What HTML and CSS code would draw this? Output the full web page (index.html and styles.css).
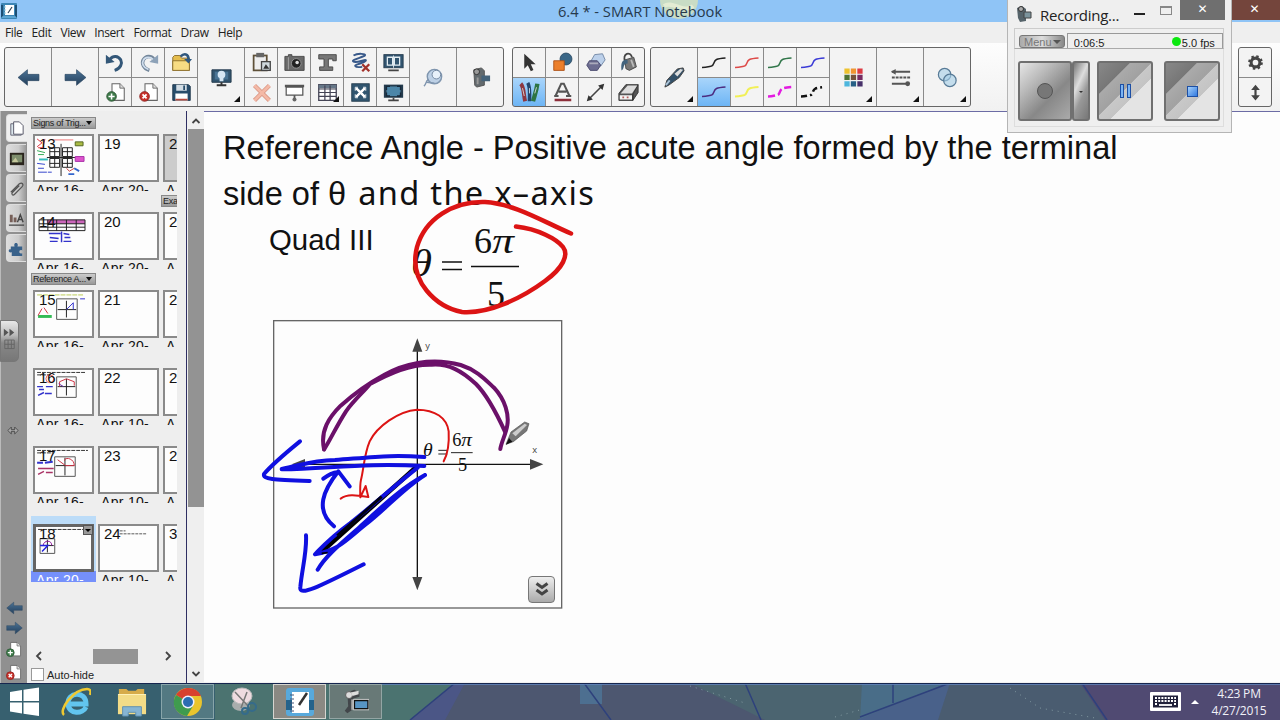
FILE: index.html
```html
<!DOCTYPE html>
<html lang="en">
<head>
    <meta charset="UTF-8">
    <meta name="viewport" content="width=device-width, initial-scale=1.0">
    <title>6.4 * - SMART Notebook</title>
    <link rel="stylesheet" href="styles.css">
</head>
<body>

<!-- shared shapes -->
<svg class="defs" width="0" height="0">
    <defs>
        <linearGradient id="arrowFill" x1="0" y1="0" x2="0" y2="1">
            <stop offset="0" stop-color="#4b7396"/><stop offset="1" stop-color="#243f5b"/>
        </linearGradient>
        <symbol id="left" viewBox="0 0 22 18"><path d="M1 9 10 1.500V6h11v6H10v4.500z" fill="url(#arrowFill)" stroke="#2a4561" stroke-width=".6"/></symbol>
        <symbol id="right" viewBox="0 0 22 18"><path d="M21 9 12 1.500V6H1v6h11v4.500z" fill="url(#arrowFill)" stroke="#2a4561" stroke-width=".6"/></symbol>
        <symbol id="page-add" viewBox="0 0 24 24">
            <path d="M8 2h9l5 5v14H8z" fill="#fff" stroke="#666" stroke-width="1.200"/><path d="M17 2v5h5" fill="#ddd" stroke="#666"/>
            <circle cx="7.500" cy="16.500" r="5.500" fill="#3e7a4a" stroke="#2b5633"/><path d="M7.500 13v7M4 16.500h7" stroke="#fff" stroke-width="1.800"/>
        </symbol>
        <symbol id="page-del" viewBox="0 0 24 24">
            <path d="M8 2h9l5 5v14H8z" fill="#fff" stroke="#666" stroke-width="1.200"/><path d="M17 2v5h5" fill="#ddd" stroke="#666"/>
            <circle cx="7.500" cy="16.500" r="5.500" fill="#c8322b" stroke="#8c1d1a"/><path d="M5.200 14.200l4.600 4.600m0-4.600l-4.600 4.600" stroke="#fff" stroke-width="2"/>
        </symbol>
        <symbol id="stroke" viewBox="0 0 24 14"><path d="M0 11.500c4 0 7-1 9.500-1.500 3-.8 1.500-4.800 5-6.500 2-.9 5-1.200 9-1.500" fill="none" stroke="currentColor"/></symbol>
    </defs>
</svg>

<header class="titlebar">
    <svg class="app-icon" viewBox="0 0 16 16"><rect width="16" height="16" rx="1" fill="#3d86b5"/><path d="M1 2v12M15 2v12" stroke="#1d4f74" stroke-width="2"/><rect x="4" y="2" width="9" height="10" fill="#fff"/><path d="M7 10l4-6" stroke="#345" stroke-width="1.200"/><path d="M3 4h2M3 7h2M3 10h2" stroke="#9cd"/><path d="M1 14h14" stroke="#7cc5f0"/></svg>
    <svg class="title-ball" viewBox="0 0 40 20"><circle cx="20" cy="0" r="19" fill="#c9dcc5"/><path d="M5 6c8-6 20 8 29 0" fill="none" stroke="#e4ecd3" stroke-width="4"/></svg>
    <span class="title">6.4 * - SMART Notebook</span>
    <span class="close">✕</span>
</header>

<nav class="menubar">
    <span>File</span><span>Edit</span><span>View</span><span>Insert</span><span>Format</span><span>Draw</span><span>Help</span>
</nav>

<div class="toolbar">
    <div class="group group-main">
        <div class="cell tall"><svg><use href="#left"/></svg></div>
        <div class="cell tall"><svg><use href="#right"/></svg></div>
        <div class="cell"><svg viewBox="0 0 24 24"><path d="M11 21c7-2 9-8 7-12-3-5-9-5-12-1" fill="none" stroke="#335778" stroke-width="3.400"/><path d="M1 3V13.500l10-2z" fill="#335778"/></svg></div>
        <div class="cell"><svg viewBox="0 0 24 24"><path d="M13 21C6 19 4 13 6 9c3-5 9-5 12-1" fill="none" stroke="#74879b" stroke-width="4"/><path d="M23 3v10.500l-10-2z" fill="#8da2b8"/><path d="M12 20c-6-2-8-7-6-10.500 2-4 8-4.500 11-1" fill="none" stroke="#cfdded" stroke-width="2"/></svg></div>
        <div class="cell"><svg viewBox="0 0 24 24"><path d="M2 21V6l2-2h6l2 3h9v14z" fill="#e5bd4d" stroke="#86692a"/><path d="M2 10h19v11H2z" fill="#f7dc83" stroke="#86692a"/><path d="M11 5c4-4 9-3 9 3" fill="none" stroke="#30587e" stroke-width="3"/><path d="M15 8h9l-4 5z" fill="#30587e"/></svg></div>
        <div class="cell tall more"><svg viewBox="0 0 24 24"><path d="M2 4h20v13H2z" fill="#31546f" stroke="#243a4c"/><path d="M5 6h14v8H5z" fill="#487394"/><circle cx="12" cy="9" r="4" fill="#d5e6f4"/><path d="M10 12h4v4h-4z" fill="#d5e6f4"/><path d="M7 20h10M12 17v3" stroke="#333" stroke-width="2"/></svg></div>
        <div class="cell"><svg viewBox="0 0 24 24"><rect x="3" y="4" width="15" height="17" fill="#eee" stroke="#5e5038" stroke-width="2"/><rect x="6" y="1" width="9" height="5" fill="#666"/><rect x="12" y="11" width="10" height="10" fill="#cfd8dc" stroke="#444" stroke-width="1.500"/><path d="M14 19l3-5 4 5z" fill="#333"/></svg></div>
        <div class="cell"><svg viewBox="0 0 24 24"><path d="M1 5h4V3h4v2h14v16H1z" fill="#6a6a6a" stroke="#444"/><path d="M5 6v14" stroke="#aaa"/><circle cx="14" cy="13" r="5.500" fill="#222" stroke="#999"/><circle cx="15" cy="12" r="2" fill="#ddd"/></svg></div>
        <div class="cell"><svg viewBox="0 0 24 24"><path d="M2 3h20v7h-4V8h-5v9h5v4H3v-4h5V8H2z" fill="#777" stroke="#444"/></svg></div>
        <div class="cell"><svg viewBox="0 0 24 24"><path d="M4 4c5-3 15-2 13 0S0 9 4 11s16-4 14-1-13 4-12 6 8 1 8 1" fill="none" stroke="#38598a" stroke-width="2.200"/><path d="M14 14l8 8m0-8l-8 8" stroke="#a2322b" stroke-width="2.600"/></svg></div>
        <div class="cell"><svg viewBox="0 0 24 24"><rect x="1" y="3" width="22" height="15" fill="#31546f" stroke="#253c4e"/><path d="M5 6h6v9H5zM13 6h6v9h-6z" fill="none" stroke="#e3edf3" stroke-width="1.500"/><path d="M12 4v14" stroke="#e3edf3"/><path d="M6 21h12" stroke="#444" stroke-width="2"/></svg></div>
        <div class="cell tall"><svg viewBox="0 0 24 24"><circle cx="13" cy="11" r="7.500" fill="#bdd0e5" stroke="#7f95ae" stroke-width="1.500"/><circle cx="15" cy="9" r="4.500" fill="#e8f1fa" stroke="#7287a0"/><path d="M7 14c-4 2-2 5-5 7M5 17l8 1" fill="none" stroke="#7f95ae" stroke-width="1.500"/></svg></div>
        <div class="cell tall"><svg viewBox="0 0 24 24"><path d="M5 4l8-2 3 3v15l-8 2-2-2z" fill="#626a6e" stroke="#555"/><circle cx="8" cy="6" r="3" fill="#999" stroke="#333"/><path d="M13 10h9v6h-9z" fill="#44637a"/><path d="M9 12v7" stroke="#999" stroke-width="2"/></svg></div>

        <div class="cell"><svg><use href="#page-add"/></svg></div>
        <div class="cell"><svg><use href="#page-del"/></svg></div>
        <div class="cell"><svg viewBox="0 0 24 24"><path d="M2 3h18l2 2v16H2z" fill="#284d6b" stroke="#1d3549"/><path d="M6 3h12v7H6z" fill="#d3dde5"/><path d="M14 4h2v5h-2z" fill="#284d6b"/><path d="M5 13h14v8H5z" fill="#fff"/><path d="M5 19h14v2H5z" fill="#b54a3d"/></svg></div>
        <div class="cell"><svg viewBox="0 0 24 24"><path d="M4 4l17 17M21 4L4 21" stroke="#dc9c8a" stroke-width="5"/><path d="M4 4l17 17M21 4L4 21" stroke="#f4b9a6" stroke-width="3"/></svg></div>
        <div class="cell"><svg viewBox="0 0 24 24"><path d="M1 3h22v3H1z" fill="#555"/><path d="M2.500 6h19v9h-19z" fill="#fff" stroke="#555" stroke-width="1.400"/><path d="M12 15v5" stroke="#555" stroke-width="2"/><circle cx="12" cy="20" r="2.300" fill="#666"/></svg></div>
        <div class="cell more"><svg viewBox="0 0 24 24"><path d="M2 3h20v18H2z" fill="#fff" stroke="#445" stroke-width="1.500"/><path d="M2 3h20v4H2z" fill="#678"/><path d="M2 8h20M2 12h20M2 16.500h20M9 4v17M15 4v17" stroke="#445" stroke-width="1.400"/></svg></div>
        <div class="cell"><svg viewBox="0 0 24 24"><rect x="2" y="2" width="20" height="20" fill="#31556f" stroke="#253c4e"/><path d="M7 7l10 10M17 7L7 17" stroke="#fff" stroke-width="2.800"/><path d="M6 10V6h3M15 6h3v4M6 14v4h3M15 18h3v-4" fill="none" stroke="#fff"/></svg></div>
        <div class="cell"><svg viewBox="0 0 24 24"><rect x="1" y="3" width="22" height="15" fill="#253c4e"/><rect x="4" y="5" width="16" height="11" rx="2" fill="#4c86a8"/><path d="M4 9V5h4M16 5h4v4M4 12v4h4M16 16h4v-4" fill="none" stroke="#17293a" stroke-width="1.500"/><path d="M6 21h12M12 18v3" stroke="#444" stroke-width="2"/></svg></div>
    </div>

    <div class="group group-tools">
        <div class="cell"><svg viewBox="0 0 24 24"><path d="M6 2v17l4-4 3.500 7 3-1.500-3-6.500h5.500z" fill="#333"/></svg></div>
        <div class="cell"><svg viewBox="0 0 24 24"><circle cx="16" cy="8" r="6.800" fill="#3a6787" stroke="#2a4a63"/><path d="M2 10h12v11H2z" fill="#ec7f2b" stroke="#a94e15"/></svg></div>
        <div class="cell"><svg viewBox="0 0 24 24"><path d="M11 3l9-1 3 7-5 7h-8l-3-6z" fill="#bcd0ea" stroke="#6b82a0"/><path d="M5 10h9l4 5-4 6H6l-4-6z" fill="#6c6c90" stroke="#46466a"/><path d="M5 13h10" stroke="#aab" stroke-width="2"/></svg></div>
        <div class="cell"><svg viewBox="0 0 24 24"><path d="M8 9l10-3 3 11-8 4-4-2z" fill="#777" stroke="#444"/><path d="M8 11c-3-10 6-12 8-5" fill="none" stroke="#444" stroke-width="2"/><path d="M11 9c-6-1-8 3-7 12 4-2 1-8 7-8z" fill="#42637d"/><path d="M15 9l3 8" stroke="#bbb" stroke-width="2"/></svg></div>
        <div class="cell active"><svg viewBox="0 0 24 24"><path d="M2 2c4 4 3 12 5 20" stroke="#8d3740" stroke-width="4.500" fill="none"/><path d="M10 1c3 5 2 12 2 21" stroke="#24456d" stroke-width="4" fill="none"/><path d="M21 2c-1 8-3 13-5 20" stroke="#2d7444" stroke-width="5" fill="none"/><path d="M4 7l2 9M12 7v6M20 6l-2 7" stroke="#ddd"/></svg></div>
        <div class="cell"><svg viewBox="0 0 24 24"><path d="M4 16L10.500 2h3L20 16M7.500 11h9M2.500 16h5M16 16h6" fill="none" stroke="#555" stroke-width="2.300"/><path d="M3 19h19v3H3z" fill="#8d2f3a"/></svg></div>
        <div class="cell"><svg viewBox="0 0 24 24"><path d="M4 20L20 4" stroke="#444" stroke-width="1.800"/><path d="M15 4l7-2-2 7zM2 22l2-7 5 5z" fill="#333"/></svg></div>
        <div class="cell"><svg viewBox="0 0 24 24"><path d="M1 13l8-10h14l-6 11v7H1zM17 14v7l6-9V3" fill="#555" stroke="#333"/><path d="M3 13l8-9h11l-6 9z" fill="#ddd"/><path d="M2 15h14v5H2z" fill="#f3f3f3"/><path d="M5 17.500h2M10 17.500h2" stroke="#b35b58" stroke-width="2"/></svg></div>
    </div>

    <div class="group group-pens">
        <div class="cell tall more"><svg viewBox="0 0 24 24"><path d="M2 22l2-7L15 3l6-1 1 3-5 7L6 20z" fill="#335068" stroke="#444"/><path d="M12 8l6-5 3 1-6 7z" fill="#ddd"/><path d="M3 20l4-5" stroke="#a9c1d5" stroke-width="2"/></svg></div>
        <div class="cell line-black"><svg><use href="#stroke"/></svg></div>
        <div class="cell line-red"><svg><use href="#stroke"/></svg></div>
        <div class="cell line-green"><svg><use href="#stroke"/></svg></div>
        <div class="cell line-blue"><svg><use href="#stroke"/></svg></div>
        <div class="cell tall more"><svg viewBox="0 0 24 24">
            <path d="M2.500 2.500H8V8H2.500z" fill="#edc22e"/><path d="M9.200 2.500h5.500V8H9.200z" fill="#f09532"/><path d="M16 2.500h5.500V8H16z" fill="#dd3b43"/>
            <path d="M2.500 9.200H8v5.500H2.500z" fill="#4f7436"/><path d="M9.200 9.200h5.500v5.500H9.200z" fill="#76523c"/><path d="M16 9.200h5.500v5.500H16z" fill="#762b62"/>
            <path d="M2.500 16H8v5.500H2.500z" fill="#4db6dd"/><path d="M9.200 16h5.500v5.500H9.200z" fill="#265f85"/><path d="M16 16h5.500v5.500H16z" fill="#47316a"/></svg></div>
        <div class="cell tall more"><svg viewBox="0 0 24 24"><path d="M3 6h19M3 18.500h15" stroke="#555" stroke-width="2"/><path d="M3 12h19" stroke="#555" stroke-width="2" stroke-dasharray="3 1"/><path d="M7 3L2 6l5 3z" fill="#555"/><circle cx="19.500" cy="18.500" r="2.500" fill="#555"/></svg></div>
        <div class="cell tall more"><svg viewBox="0 0 24 24"><g fill="#a5cfe8" fill-opacity=".6" stroke="#587b97" stroke-width="1.300"><circle cx="9" cy="9" r="6.500"/><circle cx="14.500" cy="15" r="6.500"/></g></svg></div>
        <div class="cell active line-purple"><svg><use href="#stroke"/></svg></div>
        <div class="cell line-yellow"><svg><use href="#stroke"/></svg></div>
        <div class="cell line-magenta"><svg><use href="#stroke"/></svg></div>
        <div class="cell line-dash"><svg><use href="#stroke"/></svg></div>
    </div>

    <div class="group group-settings">
        <div class="cell"><svg viewBox="0 0 24 24"><circle cx="12" cy="12" r="5" fill="none" stroke="#444" stroke-width="3.500"/><circle cx="12" cy="12" r="7.200" fill="none" stroke="#444" stroke-width="2.400" stroke-dasharray="2.800 2.855"/></svg></div>
        <div class="cell"><svg viewBox="0 0 24 24"><path d="M12 6v12" stroke="#444" stroke-width="2.500"/><path d="M12 3l5 6H7zM12 21l5-6H7z" fill="#444"/></svg></div>
    </div>
</div>

<main class="workspace">
    <aside class="tabs">
        <div class="tab tab-on"><svg viewBox="0 0 20 20"><path d="M4 5h8l3 3v9H4z" fill="#dbe6ec" stroke="#667"/><path d="M7 3h6l4 4v9H7z" fill="#fff" stroke="#556"/></svg></div>
        <div class="tab"><svg viewBox="0 0 20 20"><path d="M3 4h15v13H3z" fill="#29241c"/><path d="M5 6h11v8H5z" fill="#7e8e6d"/><path d="M5 14l4-5 3 5z" fill="#c4c79b"/></svg></div>
        <div class="tab"><svg viewBox="0 0 20 20"><path d="M4 14l9-9c3-2 5 1 3 3l-8 8c-2 2-4 0-2-2l7-7" fill="none" stroke="#555" stroke-width="1.300"/></svg></div>
        <div class="tab"><svg viewBox="0 0 20 20"><path d="M3 6h3v8H3zM7 9h3v5H7z" fill="#765f58"/><path d="M11 14l3-8 3 8M12 11h4M2 17h16" fill="none" stroke="#444" stroke-width="1.500"/></svg></div>
        <div class="tab"><svg viewBox="0 0 20 20"><path d="M4 8h4c-2-5 5-5 3 0h5v4c-4-2-4 5 0 3v3H5v-4c-4 1-4-4-1-3z" fill="#38618a"/></svg></div>
        <div class="flyout">
            <svg viewBox="0 0 18 42"><path d="M3 8l5 4-5 4zM9 8l5 4-5 4z" fill="#555"/><path d="M4 20h10v9H4zM4 24.500h10M7.500 20v9M11 20v9" fill="none" stroke="#666"/></svg>
        </div>
        <svg class="resize" viewBox="0 0 14 10"><path d="M1 5l4-4v3h4V1l4 4-4 4V6H5v3z" fill="#aaa" stroke="#444"/></svg>
        <div class="page-buttons">
            <svg width="19" height="14"><use href="#left"/></svg>
            <svg width="19" height="14"><use href="#right"/></svg>
            <svg width="17" height="17"><use href="#page-add"/></svg>
            <svg width="17" height="17"><use href="#page-del"/></svg>
        </div>
    </aside>

    <section class="sorter">
        <div class="pages">
            <div class="page"><div class="label">Signs of Trig... <i></i></div>
                <div class="thumb"><b>13</b><svg viewBox="0 0 58 45"><path d="M17 4h22" stroke="#e77"/><path d="M15 12h10v9H15zM28 12h10v9H28zM15 23h10v9H15zM28 23h10v9H28zM20 12v20M33 12v20M15 16h10M28 16h10M15 28h10M28 28h10M26.500 8v33M12 22h30" stroke="#222" fill="none"/><path d="M2 3l5 4-5 4M3 12h5l2-9" stroke="#d34" fill="none"/><path d="M2 15l8 2M3 19h6" stroke="#3a5"/><path d="M4 24h9" stroke="#3bb" stroke-width="2"/><path d="M2 28l8 1M3 33h6M3 37h9M13 37h4" stroke="#34c"/><path d="M41 6h8v4h-8z" fill="#ab4" stroke="#562"/><path d="M41 21h9v5h-9z" fill="#d5c" stroke="#a3a"/><path d="M32 33l3 3 5-3" stroke="#c44" fill="none"/><path d="M34 39h6M40 33l5 3" stroke="#36c" stroke-width="2"/></svg></div><div class="date">Apr 16-</div></div>
            <div class="page"><div class="thumb"><b>19</b></div><div class="date">Apr 20-</div></div>
            <div class="page"><div class="thumb thumb-grey"><b>2</b></div><div class="date">A</div></div>

            <div class="page"><div class="thumb"><b>14</b><svg viewBox="0 0 58 45"><path d="M12 6h39v4H12z" fill="#c6b"/><path d="M4 6h47v11H4zM4 10h47M4 13.500h47M13 6v11M22 6v11M32 6v11M42 6v11" stroke="#222" fill="none"/><path d="M14 20h12M15 24l9 1M15 28h8M29 20l6 1M30 24h6M29 28h8M27 18v11" stroke="#33c" stroke-width="1.500"/></svg></div><div class="date">Apr 16-</div></div>
            <div class="page"><div class="thumb"><b>20</b></div><div class="date">Apr 20-</div></div>
            <div class="page"><div class="label">Exa</div><div class="thumb"><b>2</b></div><div class="date">A</div></div>

            <div class="page"><div class="label">Reference A... <i></i></div>
                <div class="thumb"><b>15</b><svg viewBox="0 0 58 45"><path d="M2 3h48" stroke="#bc5" stroke-dasharray="5 1"/><path d="M22 7h21v21H22z" fill="none" stroke="#555"/><path d="M32 9v17M23 18h19" stroke="#222"/><path d="M32 18l7-7v7M46 7h5" stroke="#33c" fill="none"/><path d="M3 25h14" stroke="#3b5" stroke-width="3"/><path d="M3 24l4-7M9 16l4 6" stroke="#c34"/></svg></div><div class="date">Apr 16-</div></div>
            <div class="page"><div class="thumb"><b>21</b></div><div class="date">Apr 20-</div></div>
            <div class="page"><div class="thumb"><b>2</b></div><div class="date">A</div></div>

            <div class="page"><div class="thumb"><b>16</b><svg viewBox="0 0 58 45"><path d="M2 2.500h50M2 5h14" stroke="#333" stroke-dasharray="4 1"/><path d="M22 7h20v21H22z" fill="none" stroke="#555"/><path d="M32 9v17M23 17h18" stroke="#222"/><path d="M25 17v-5l7-3 8 3v4" stroke="#c34" fill="none"/><circle cx="15" cy="9" r="4" fill="none" stroke="#e66"/><path d="M2 17h6M4 20h5M11 17h7M3 26l6-3M10 24h7" stroke="#33c" stroke-width="1.500"/><path d="M24 14l5 3" stroke="#63a"/></svg></div><div class="date">Apr 16-</div></div>
            <div class="page"><div class="thumb"><b>22</b></div><div class="date">Apr 10-</div></div>
            <div class="page"><div class="thumb"><b>2</b></div><div class="date">A</div></div>

            <div class="page"><div class="thumb"><b>17</b><svg viewBox="0 0 58 45"><path d="M2 2.500h52M2 5h17" stroke="#333" stroke-dasharray="4 1"/><path d="M20 9h21v20H20z" fill="none" stroke="#555"/><path d="M30.500 10v18M21 18h19" stroke="#222"/><path d="M23 12l8 6h9c0-8-10-9-10-5" stroke="#c34" fill="none"/><path d="M2 15h6M10 15l8-1" stroke="#33c" stroke-width="2"/><path d="M3 21h16M3 27l6-3M11 25h7" stroke="#a36" stroke-width="1.500"/></svg></div><div class="date">Apr 16-</div></div>
            <div class="page"><div class="thumb"><b>23</b></div><div class="date">Apr 10-</div></div>
            <div class="page"><div class="thumb"><b>2</b></div><div class="date">A</div></div>

            <div class="page selected"><div class="thumb"><b>18</b><i class="drop"></i><svg viewBox="0 0 58 45"><path d="M2 2.500h46" stroke="#333" stroke-dasharray="4 1"/><path d="M4 12h15v15H4z" fill="none" stroke="#555"/><path d="M11.500 13v13M5 19h13" stroke="#222"/><path d="M7 19c1-6 9-6 9 0" fill="none" stroke="#819"/><path d="M4 19h8l-6 6" fill="none" stroke="#22d" stroke-width="1.500"/></svg></div><div class="date">Apr 20-</div></div>
            <div class="page"><div class="thumb"><b>24</b><svg viewBox="0 0 58 45"><path d="M20 5h6M20 8h28" stroke="#555" stroke-dasharray="3 1"/></svg></div><div class="date">Apr 10-</div></div>
            <div class="page"><div class="thumb"><b>3</b></div><div class="date">A</div></div>
        </div>
        <div class="hscroll">
            <svg viewBox="0 0 16 16"><path d="M10 4L6 8l4 4" /></svg>
            <span></span>
            <svg viewBox="0 0 16 16"><path d="M6 4l4 4-4 4" /></svg>
        </div>
        <div class="autohide"><i></i>Auto-hide</div>
    </section>

    <div class="vscroll">
        <svg viewBox="0 0 16 16"><path d="M4.500 10L8 6.500l3.500 3.500"/></svg>
        <span></span>
        <svg viewBox="0 0 16 16"><path d="M4.500 6L8 9.500 11.500 6"/></svg>
    </div>

    <section class="board">
        <p class="note">Reference Angle - Positive acute angle formed by the terminal<br>side of θ <span>and the x–axis</span></p>
        <p class="quad">Quad III</p>

        <svg class="ink" viewBox="204 112 1076 570">
            <!-- equation -->
            <g class="math">
                <text x="411" y="276" font-size="38" font-style="italic" textLength="21" lengthAdjust="spacingAndGlyphs">θ</text>
                <text x="474" y="253" font-size="36">6</text>
                <text x="492" y="253" font-size="36" font-style="italic" textLength="22" lengthAdjust="spacingAndGlyphs">π</text>
                <text x="487" y="306" font-size="36">5</text>
                <path d="M442 262h20M442 269.500h20M471 266.500h48" stroke="#111" stroke-width="1.700"/>
            </g>
            <path d="M571 233.500C542 221 515 204 485 202c-32-1-60 17-68 45-9 35 20 60 45 65 27 2 60-14 83-31 18-13 24-26 18-34-6-8-25-18-47-20.500" class="pen red thick"/>

            <!-- axes -->
            <g transform="translate(250 315) scale(.33333)">
                <rect x="71" y="17" width="864" height="862" fill="none" stroke="#666" stroke-width="4"/>
                <path d="M502 100v700M140 448h710" stroke="#111" stroke-width="4"/>
                <path d="M502 70l15 40h-30zM502 826l15-40h-30zM880 448l-40-16v32zM125 448l40-16v32z" fill="#444"/>
                <text x="526" y="102" class="axis">y</text>
                <text x="847" y="414" class="axis">x</text>
                <g class="math">
                    <text x="519" y="424" font-size="56" font-style="italic" textLength="29" lengthAdjust="spacingAndGlyphs">θ</text>
                    <text x="607" y="393" font-size="55">6</text>
                    <text x="634" y="393" font-size="55" font-style="italic" textLength="32" lengthAdjust="spacingAndGlyphs">π</text>
                    <text x="624" y="468" font-size="55">5</text>
                    <path d="M565 406h27M565 417h27M603 413h65" stroke="#222" stroke-width="3"/>
                </g>
                <path d="M500 455L210 715" stroke="#000" stroke-width="14"/>
                <path d="M222 402c-12-55 15-95 50-130 45-40 80-65 130-92 55-32 140-55 230-30 50 16 75 45 100 68 35 38 45 82 40 112-4 28-18 50-21 72" class="pen purple"/>
                <path d="M222 404c22-35 37-70 66-115 25-35 50-55 72-82 60-32 120-60 185-58 50-4 90 18 133 58 30 30 65 95 87 143" class="pen purple"/>
                <path d="M581 439c15-28 17-55 15-90-5-40-40-65-95-65-55 4-120 50-142 95-17 40-18 85-26 115-4 20-2 40-2 52M272 551c20-14 42-11 83-5l-8-33-16 34" class="pen red thin"/>
                <path d="M150 379C112 410 70 444 42 477c-4 16 25 17 137 21" class="pen blue"/>
                <path d="M95 462c60-12 90-26 160-27 130-10 170-16 268-9M95 463c150-3 250-20 428-10" class="pen blue"/>
                <path d="M525 480C450 520 380 590 330 635c-50 45-100 83-127 129M503 458C430 515 370 570 300 625c-60 44-78 65-105 93 70-12 90-40 150-88C410 580 460 520 525 480" class="pen blue"/>
                <path d="M168 661c3 50-12 100-17 155-5 30 55 0 190-68M252 634c-60-50-30-110 13-165l34 45M220 491c15-12 30-18 45-20" class="pen blue"/>
                <path d="M395 545L262 662" stroke="#001" stroke-width="9"/>
                <path d="M215 715l18-2" stroke="#001" stroke-width="5"/>
                <!-- pen cursor -->
                <path d="M768 388l15-37 41-30 13 5-7 22-40 32z" fill="#777" stroke="#555" stroke-width="2"/>
                <path d="M787 355l37-29 7 4-34 34z" fill="#ccc"/>
                <path d="M768 389l9-20 10 11z" fill="#111"/>
            </g>
        </svg>
        <button class="expand"><svg viewBox="0 0 24 24"><path d="M6.500 6.500l5.500 4 5.500-4M6.500 13l5.500 4 5.500-4" fill="none" stroke="#444" stroke-width="3"/></svg></button>
    </section>
</main>

<div class="recorder">
    <div class="rec-title">
        <svg class="rec-icon" viewBox="0 0 16 18"><path d="M1 3l5-2 4 3v12l-6 1-2-4z" fill="#55636a"/><circle cx="5" cy="4" r="2.500" fill="#aaa" stroke="#333"/><path d="M8 7h7v6H8z" fill="#7b939c" stroke="#444"/></svg>
        <span>Recording...</span>
        <i class="min"></i><i class="max"></i><b>✕</b>
    </div>
    <div class="rec-status">
        <div class="rec-menu">Menu <i></i></div>
        <div class="rec-info"><span class="time">0:06:56</span><i></i><span>5.0 fps</span></div>
    </div>
    <div class="rec-buttons">
        <div class="rec-btn rec"><i></i></div>
        <div class="rec-btn rec-drop"><i></i></div>
        <div class="rec-btn pause"><i></i><i></i></div>
        <div class="rec-btn stop"><i></i></div>
    </div>
</div>

<footer class="taskbar">
    <svg class="wallpaper" viewBox="0 0 1280 37" preserveAspectRatio="none">
        <path d="M0 0h1280v37H0z" fill="#37606f"/>
        <path d="M215 0h240l-45 37H215z" fill="#4b7370"/>
        <path d="M455 0h590l110 37H410z" fill="#4d5770"/>
        <path d="M455 0h10l-20 37h-35z" fill="#4b5686"/>
        <path d="M690 0h175v37H765z" fill="#4b6470"/>
        <path d="M862 0h85l-87 37z" fill="#496d88"/>
        <path d="M947 0l-90 37h95l30-37z" fill="#49618a"/>
        <path d="M950 0h135l22 37H938z" fill="#4a5c70"/>
        <path d="M1080 0h200v37h-175z" fill="#504a72"/>
        <path d="M580 0h22v21h-22z" fill="#4d6f90"/>
        <path d="M584 0l27 37M745 0l16 37M893 0v20M860 34l90-34M1082 0l25 37M455 0l-45 37" stroke="#2e417c" stroke-width="1.500" fill="none"/>
        <path d="M690 3l55 17M835 34l28-8M1010 5l30 20 55 10" stroke="#8199a0" stroke-dasharray="1 5" fill="none"/>
        <path d="M0 .5h1280" stroke="#16264f"/>
        <path d="M380 1.500h900" stroke="#6284bd" stroke-width=".8"/>
    </svg>
    <div class="apps">
        <div class="app start"><svg viewBox="0 0 30 30"><path d="M1 5l12-2v11H1zM14.500 2.700L30 .5V14H14.500zM1 15.500h12v11L1 24.500zM14.500 15.500H30V29l-15.500-2.300z" fill="#fff"/></svg></div>
        <div class="app"><svg viewBox="0 0 30 30"><path d="M25 20c-3 7-17 8-18-3C6 5 25 3 25 17H9" fill="none" stroke="#62c5ef" stroke-width="5"/><path d="M3 28c-6-5 10-26 23-26 4 0 4 3 3 6" fill="none" stroke="#efc931" stroke-width="2.500"/></svg></div>
        <div class="app"><svg viewBox="0 0 32 30"><path d="M2 1h8l2 2h8l2-2h7v26H2z" fill="#d6ab49"/><path d="M1 7h30v21H1z" fill="#f3dc87"/><path d="M1 7h30" stroke="#fff3bd"/><path d="M6 30V20h20v10h-6v-4h-8v4z" fill="#86b5d3" stroke="#5d8faf"/></svg></div>
        <div class="app open"><svg viewBox="0 0 30 30"><circle cx="15" cy="15" r="14" fill="#e9c42d"/><path d="M15 15L3 8C9-2 24-1 28 9H15z" fill="#d8412f"/><path d="M15 15L3 8c-6 10 1 20 11 21l6-10z" fill="#3f9b4e"/><circle cx="15" cy="15" r="6.500" fill="#eef"/><circle cx="15" cy="15" r="5" fill="#2b6cb2"/></svg></div>
        <div class="app"><svg viewBox="0 0 30 30"><ellipse cx="12" cy="18" rx="9" ry="6" fill="#a9adad"/><ellipse cx="13" cy="9" rx="10" ry="8" fill="#eedbe0" stroke="#bbb"/><path d="M6 5l14 15M18 5l-6 16" stroke="#777" stroke-width="1.500"/><circle cx="23" cy="20" r="4" fill="none" stroke="#356b8b" stroke-width="2"/><circle cx="16" cy="24" r="3" fill="none" stroke="#356b8b" stroke-width="2"/></svg></div>
        <div class="app open front"><svg viewBox="0 0 30 30"><rect x="1" y="1" width="28" height="28" rx="3" fill="#58a9dc"/><path d="M1 13h28v10H1z" fill="#23628b"/><path d="M7 5h17v21H7z" fill="#fff"/><path d="M5 8h4M5 12h4M5 16h4M5 20h4M5 24h4" stroke="#457"/><path d="M14 18l8-12" stroke="#333" stroke-width="2.500"/></svg></div>
        <div class="app open recapp"><svg viewBox="0 0 30 30"><path d="M5 4l8-3 6 3v5l-7 2v12l-7 5-3-3 4-5z" fill="#42464a"/><circle cx="7" cy="7" r="4" fill="#ddd" stroke="#555"/><path d="M9 4l9-2v4l-7 2z" fill="#ddd"/><path d="M11 12v12" stroke="#aaa" stroke-width="3"/><path d="M13 13h16v10H13z" fill="#5794c4" stroke="#111" stroke-width="2"/><path d="M12 12h18v12H12z" fill="none" stroke="#ddd"/></svg></div>
    </div>
    <div class="tray">
        <svg class="keyboard" viewBox="0 0 31 19"><rect width="31" height="19" rx="1" fill="#fff"/><path d="M3 3.500h25v12H3z" fill="#20203a"/><path d="M5 6h21M5 9h21M5 12h2M24 12h2" stroke="#fff" stroke-width="2" stroke-dasharray="2 1.200"/><path d="M9 13h13" stroke="#fff" stroke-width="1.800"/></svg>
        <i></i>
        <div class="clock">4:23 PM<br>4/27/2015</div>
    </div>
</footer>

</body>
</html>
```
FILE: styles.css
```css
* {
    box-sizing: border-box;
}
body {
    margin: 0;
    width: 1280px;
    height: 720px;
    overflow: hidden;
    position: relative;
    display: flex;
    flex-direction: column;
    font-family: "Open Sans", "Noto Sans", sans-serif;
    color: #222;
    background: #f0f0f0;
}
.defs {
    position: absolute;
}
i {
    font-style: normal;
}

/* title and menu */
.titlebar {
    height: 22px;
    background: #8fc4f6;
    display: flex;
    align-items: center;
    justify-content: center;
    position: relative;
    flex: none;
}
.app-icon {
    position: absolute;
    left: 1px;
    top: 3px;
    width: 16px;
    height: 16px;
}
.title-ball {
    position: absolute;
    left: 659px;
    top: 0;
    width: 40px;
    height: 20px;
}
.title {
    position: relative;
    font-size: 14.7px;
    color: #26394d;
}
.close {
    position: absolute;
    right: 0;
    top: 0;
    width: 48px;
    height: 20px;
    line-height: 19px;
    padding-right: 3px;
    text-align: center;
    font-family: "DejaVu Sans", sans-serif;
    font-size: 12px;
    color: #fff;
    background: #74453c;
}
.menubar {
    height: 21px;
    flex: none;
    padding: 0 5px;
    display: flex;
    gap: 9.2px;
    font-size: 12px;
    line-height: 22px;
    letter-spacing: -0.4px;
    background: #efefef;
}

/* toolbar */
.toolbar {
    height: 68px;
    flex: none;
    padding: 4px 8px 4px 4px;
    display: flex;
    background: linear-gradient(#fdfdfd, #f1f1f1);
}
.group {
    height: 60px;
    display: grid;
    grid-template-rows: 29px 28px;
    gap: 1px;
    background: #8a8a8a;
    border: 1px solid #666;
    border-radius: 3px;
    overflow: hidden;
}
.group-main {
    grid-template-columns: 46px 46px 32px 32px 32px 46px 32px 32px 32px 32px 32px 46px 46px;
    margin-right: 8px;
}
.group-tools {
    grid-template-columns: repeat(4, 32px);
    margin-right: 5px;
}
.group-pens {
    grid-template-columns: 46px repeat(4, 32px) 46px 46px 46px;
}
.group-settings {
    grid-template-columns: 32px;
    margin-left: auto;
}
.cell {
    display: flex;
    align-items: center;
    justify-content: center;
    background: #f3f3f3;
    position: relative;
}
.cell svg {
    width: 21px;
    height: 21px;
}
.tall {
    grid-row: span 2;
}
.cell.tall svg {
    width: 23px;
    height: 23px;
}
.more::after {
    content: "";
    position: absolute;
    right: 4px;
    bottom: 4px;
    border-left: 6px solid transparent;
    border-bottom: 6px solid #111;
}
.active {
    background: linear-gradient(#a9d5fb, #6db5f5);
}
[class*="line-"] svg {
    width: 24px;
    height: 14px;
    stroke-width: 1.5px;
}
.line-black { color: #222; }
.line-red { color: #dd4a48; }
.line-green { color: #31764a; }
.line-blue { color: #3b3bd6; }
.line-purple { color: #4c2c80; }
.line-yellow { color: #f1ef57; }
.line-magenta { color: #e31be0; }
.line-dash { color: #111; }
[class*="line-"].line-yellow svg { stroke-width: 2px; }
[class*="line-"].line-magenta svg { stroke-width: 2.5px; stroke-dasharray: 7 3; }
[class*="line-"].line-dash svg { stroke-width: 2.5px; stroke-dasharray: 6 3 2 3; }

/* workspace */
.workspace {
    height: 572px;
    flex: none;
    display: flex;
}
.tabs {
    width: 27px;
    padding: 3px 1px 0 5px;
    display: flex;
    flex-direction: column;
    gap: 2px;
    background: #909090;
    border-left: 1px solid #bbb;
}
.tab {
    height: 28px;
    flex: none;
    padding: 4px 0;
    border: 1px solid #ddd;
    border-right: 0;
    border-radius: 4px 0 0 4px;
    background: linear-gradient(90deg, #ddd, #ccc 60%, #999);
}
.tab-on {
    background: #efefef;
    margin-right: -1px;
}
.tab svg {
    width: 19px;
    height: 19px;
}
.flyout {
    width: 19px;
    height: 42px;
    flex: none;
    margin: 56px 0 0 -6px;
    border: 1px solid #777;
    border-radius: 0 5px 5px 0;
    background: linear-gradient(#e8e8e8 0%, #bbb 35%, #888 55%, #777);
}
.flyout svg {
    width: 17px;
    height: 40px;
}
.resize {
    width: 12px;
    height: 9px;
    margin-top: 62px;
    margin-left: 1px;
}
.page-buttons {
    margin-top: auto;
    margin-left: -1px;
    margin-bottom: 2px;
    display: flex;
    flex-direction: column;
    gap: 6px;
}
.sorter {
    width: 160px;
    padding: 6px 9px 0 4px;
    display: flex;
    flex-direction: column;
    background: #eee;
    border-right: 1px solid #2e2e62;
}
.pages {
    height: 470px;
    padding-left: 2px;
    display: grid;
    grid-template-columns: 61px 61px 14px;
    grid-auto-rows: 78px;
    column-gap: 4px;
    overflow: hidden;
    font-family: "Liberation Sans", Arial, sans-serif;
}
.page {
    padding-top: 17px;
    position: relative;
    min-width: 0;
}
.label {
    position: absolute;
    left: -2px;
    top: 0;
    width: 65px;
    height: 12px;
    padding-left: 1px;
    font-size: 9px;
    line-height: 10px;
    letter-spacing: -0.3px;
    white-space: nowrap;
    background: linear-gradient(#ccc, #999);
    border: 1px solid #888;
}
.label i {
    position: absolute;
    right: 3px;
    top: 3px;
    border: 3.5px solid transparent;
    border-top: 4px solid #111;
}
.thumb {
    width: 61px;
    height: 48px;
    position: relative;
    background: #fdfdfd;
    border: 2px solid #8a8a8a;
}
.thumb svg {
    position: absolute;
    left: 0;
    top: 0;
    width: 57px;
    height: 44px;
}
.thumb b {
    position: absolute;
    z-index: 1;
    left: 4px;
    top: -1px;
    font-size: 15px;
    line-height: 17px;
    font-weight: normal;
    color: #111;
}
.thumb-grey {
    background: #ccc;
}
.date {
    height: 9px;
    padding-left: 3px;
    font-size: 14px;
    line-height: 17px;
    overflow: hidden;
    white-space: nowrap;
    color: #111;
    letter-spacing: 0.3px;
}
.selected::before {
    content: "";
    position: absolute;
    left: -2px;
    top: 9px;
    width: 65px;
    height: 66px;
    background: linear-gradient(#bcdcf8 55px, #7590fb 55px);
}
.selected .thumb {
    border: 3px solid #656565;
}
.selected .thumb b {
    left: 3px;
    top: -2px;
}
.selected .date {
    position: relative;
    color: #fff;
}
.drop {
    position: absolute;
    z-index: 1;
    right: -2px;
    top: -2px;
    width: 10px;
    height: 10px;
    background: #999;
    border: 1px solid #555;
}
.drop::after {
    content: "";
    position: absolute;
    left: 1px;
    top: 3px;
    border: 3px solid transparent;
    border-top-color: #000;
}
.hscroll {
    height: 16px;
    margin-top: 62px;
    display: flex;
    align-items: center;
}
.hscroll svg, .vscroll svg {
    width: 16px;
    height: 16px;
    fill: none;
    stroke: #444;
    stroke-width: 1.8px;
}
.hscroll span {
    width: 45px;
    height: 15px;
    margin: 0 22px 0 46px;
    background: #949494;
}
.autohide {
    margin-top: 4px;
    display: flex;
    gap: 3px;
    font: 11px/15px "Liberation Sans", Arial, sans-serif;
}
.autohide i {
    width: 13px;
    height: 13px;
    background: #fff;
    border: 1px solid #999;
}
.vscroll {
    width: 17px;
    padding: 2px 0 1px 1px;
    display: flex;
    flex-direction: column;
    background: #efefef;
}
.vscroll span {
    height: 378px;
    margin-bottom: auto;
    background: #939393;
}

/* lesson page */
.board {
    flex: 1;
    height: 571px;
    position: relative;
    padding: 13px 0 0 19px;
    background: #fdfdfd;
    border-top: 1px solid #6c6ca5;
    color: #111;
    font-family: "Liberation Sans", Arial, sans-serif;
}
.note {
    margin: 0;
    font-size: 32.6px;
    line-height: 46px;
    white-space: nowrap;
}
.note span {
    font-family: "Noto Sans", sans-serif;
    letter-spacing: 1.3px;
    margin-left: 3px;
    line-height: 40px;
}
.quad {
    margin: 5px 0 0 46px;
    font-size: 29.4px;
    line-height: 36px;
}
.ink {
    position: absolute;
    left: 0;
    top: 0;
    width: 1076px;
    height: 570px;
}
.math {
    font-family: "Liberation Serif", "Times New Roman", serif;
    fill: #111;
}
.axis {
    font-family: "Open Sans", sans-serif;
    font-size: 28px;
    fill: #444;
}
.pen {
    fill: none;
    stroke-linecap: round;
    stroke-linejoin: round;
    stroke-width: 12px;
}
.red { stroke: #dc1414; }
.purple { stroke: #6b1069; }
.blue { stroke: #1010e0; }
.thick { stroke-width: 4.5px; }
.thin { stroke-width: 6px; }
.expand {
    position: absolute;
    left: 324px;
    top: 464px;
    width: 27px;
    height: 27px;
    padding: 0;
    border: 1px solid #777;
    border-radius: 4px;
    background: linear-gradient(#eee, #aaa);
}
.expand svg {
    width: 24px;
    height: 24px;
}

/* floating recorder window */
.recorder {
    position: absolute;
    left: 1007px;
    top: 0;
    width: 225px;
    height: 133px;
    padding: 0 7px 0 6px;
    background: #efefef;
    border: 1px solid #b5b5b5;
    border-top: 0;
}
.rec-title {
    height: 28px;
    display: flex;
    align-items: flex-start;
}
.rec-icon {
    width: 16px;
    height: 18px;
    margin: 5px 8px 0 2px;
}
.rec-title span {
    width: 94px;
    font-size: 15px;
    line-height: 30px;
    letter-spacing: -0.25px;
}
.min {
    width: 11px;
    height: 2px;
    margin: 13px 15px 0 0;
    background: #222;
}
.max {
    width: 12px;
    height: 9px;
    margin: 6px 8px 0 0;
    border: 1px solid #888;
    border-top-width: 2px;
}
.rec-title b {
    width: 45px;
    height: 20px;
    margin-right: -2px;
    text-align: center;
    font: 12px/19px "DejaVu Sans", sans-serif;
    color: #fff;
    background: #6f6f6f;
}
.rec-status {
    height: 21px;
    display: flex;
    padding: 4px 0 0 4px;
    border: 1px solid #ccc;
    border-bottom-color: #aaa;
}
.rec-menu {
    width: 46px;
    height: 13px;
    margin-top: 2px;
    padding-left: 4px;
    overflow: hidden;
    position: relative;
    font: 11px/13px "Liberation Sans", sans-serif;
    color: #777;
    background: linear-gradient(90deg, #aaa, #ddd 50%, #888);
    border: 1px solid #777;
    border-radius: 3px;
}
.rec-menu i {
    position: absolute;
    right: 3px;
    top: 4px;
    border: 4px solid transparent;
    border-top-color: #555;
}
.rec-info {
    width: 157px;
    height: 15px;
    margin-left: 2px;
    display: flex;
    border: 1px solid #999;
    border-bottom: 0;
    font: 11px/19px "Liberation Sans", Arial, sans-serif;
}
.rec-info .time {
    width: 31px;
    height: 13px;
    margin-left: 6px;
    overflow: hidden;
}
.rec-info i {
    width: 9px;
    height: 9px;
    margin: 3px 1px 0 67px;
    border-radius: 50%;
    background: #0be80f;
}
.rec-info span {
    white-space: nowrap;
}
.rec-buttons {
    height: 78px;
    padding: 12px 0 0 3px;
    display: flex;
    border: 1px solid #ddd;
    border-top: 0;
}
.rec-btn {
    height: 60px;
    display: flex;
    align-items: center;
    justify-content: center;
    border: 2px solid #707070;
    border-radius: 3px;
}
.rec {
    width: 54px;
    background: linear-gradient(135deg, #e6e6e6, #bbb 30%, #888 62%, #aaa);
}
.rec i {
    width: 16px;
    height: 16px;
    border-radius: 50%;
    background: #777;
    border: 1px solid #555;
}
.rec-drop {
    width: 18px;
    background: linear-gradient(115deg, #777, #ddd 35%, #999 60%, #777);
}
.rec-drop i {
    margin-top: 3px;
    border: 2.5px solid transparent;
    border-top-color: #333;
}
.pause, .stop {
    width: 56px;
    gap: 3px;
    background: linear-gradient(135deg, #888 0, #777 28%, #aaa 29%, #a1a1a1 48%, #c8c8c8 49%, #c4c4c4 62%, #e4e4e4 63%);
}
.pause {
    margin-left: 7px;
}
.stop {
    margin-left: 11px;
}
.pause i {
    width: 4px;
    height: 14px;
    background: #7bb4f3;
    border: 1px solid #1d4fa4;
}
.stop i {
    width: 11px;
    height: 11px;
    background: linear-gradient(135deg, #a4d0fa, #327ae0);
    border: 1px solid #1d4fa4;
}

/* taskbar */
.taskbar {
    height: 37px;
    flex: none;
    display: flex;
    justify-content: space-between;
    position: relative;
}
.wallpaper {
    position: absolute;
    width: 1280px;
    height: 37px;
}
.apps {
    position: relative;
    display: flex;
    padding-top: 1px;
    gap: 3px;
    margin-left: -7px;
}
.app {
    width: 53px;
    height: 35px;
    display: flex;
    align-items: center;
    justify-content: center;
}
.start {
    padding-left: 8px;
}
.app svg {
    width: 30px;
    height: 30px;
}
.open {
    background: rgba(150, 180, 175, 0.3);
    border: 1px solid rgba(190, 210, 210, 0.5);
}
.front {
    background: #8a8983;
    border-color: #d5d5d0;
}
.recapp {
    background: #687977;
}
.app.recapp svg {
    width: 26px;
    height: 26px;
}
.tray {
    position: relative;
    display: flex;
    align-items: center;
    padding-right: 10px;
}
.keyboard {
    width: 31px;
    height: 19px;
}
.tray i {
    margin: -3px 9px 0 10px;
    border: 4px solid transparent;
    border-bottom-color: #fff;
}
.clock {
    width: 62px;
    text-align: center;
    font-size: 12px;
    line-height: 17px;
    color: #f1f1f8;
    letter-spacing: -0.2px;
    white-space: nowrap;
}
```
